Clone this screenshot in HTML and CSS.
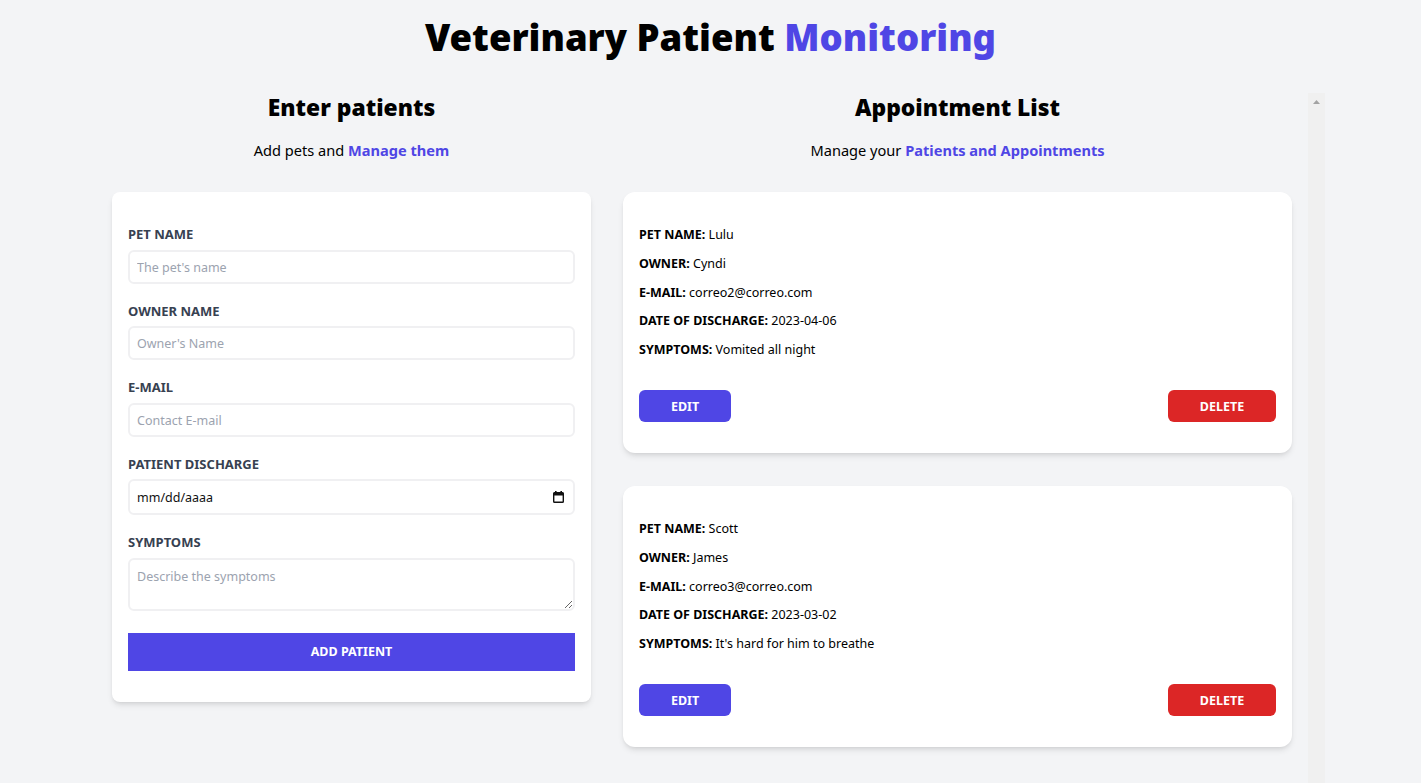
FILE: index.html
```html
<!DOCTYPE html>
<html lang="en">
<head>
<meta charset="utf-8">
<title>Veterinary Patient Monitoring</title>
<link rel="stylesheet" href="styles.css">
</head>
<body>
  <h1 class="title">Veterinary Patient <span class="accent">Monitoring</span></h1>
  <div class="layout">
    <section class="form-col">
      <h2 class="col-title">Enter patients</h2>
      <p class="col-sub">Add pets and <span class="accent-b">Manage them</span></p>
      <form class="form-card">
        <div class="field">
          <label class="label" for="pet">PET NAME</label>
          <input class="input" id="pet" type="text" placeholder="The pet's name">
        </div>
        <div class="field">
          <label class="label" for="owner">OWNER NAME</label>
          <input class="input" id="owner" type="text" placeholder="Owner's Name">
        </div>
        <div class="field">
          <label class="label" for="email">E-MAIL</label>
          <input class="input" id="email" type="email" placeholder="Contact E-mail">
        </div>
        <div class="field">
          <label class="label" for="date">PATIENT DISCHARGE</label>
          <div class="date-wrap">
            <input class="input input-date" id="date" type="text" placeholder="mm/dd/aaaa">
            <svg class="cal-icon" width="11" height="12" viewBox="0 0 11 12" aria-hidden="true">
              <rect x="2" y="0" width="1.6" height="2.5" fill="#111"/>
              <rect x="7.4" y="0" width="1.6" height="2.5" fill="#111"/>
              <rect x="0.7" y="1.7" width="9.6" height="9.6" rx="0.8" fill="none" stroke="#111" stroke-width="1.4"/>
              <rect x="0.7" y="1.7" width="9.6" height="2.8" fill="#111"/>
            </svg>
          </div>
        </div>
        <div class="field field-last">
          <label class="label" for="symptoms">SYMPTOMS</label>
          <textarea class="input textarea" id="symptoms" placeholder="Describe the symptoms"></textarea>
        </div>
        <button class="add-btn" type="button">ADD PATIENT</button>
      </form>
    </section>

    <section class="list-col">
      <h2 class="col-title">Appointment List</h2>
      <p class="col-sub">Manage your <span class="accent-b">Patients and Appointments</span></p>

      <article class="patient-card">
        <p class="row"><b>PET NAME:</b> Lulu</p>
        <p class="row"><b>OWNER:</b> Cyndi</p>
        <p class="row"><b>E-MAIL:</b> correo2@correo.com</p>
        <p class="row"><b>DATE OF DISCHARGE:</b> 2023-04-06</p>
        <p class="row row-last"><b>SYMPTOMS:</b> Vomited all night</p>
        <div class="actions">
          <button class="btn btn-edit" type="button">EDIT</button>
          <button class="btn btn-delete" type="button">DELETE</button>
        </div>
      </article>

      <article class="patient-card">
        <p class="row"><b>PET NAME:</b> Scott</p>
        <p class="row"><b>OWNER:</b> James</p>
        <p class="row"><b>E-MAIL:</b> correo3@correo.com</p>
        <p class="row"><b>DATE OF DISCHARGE:</b> 2023-03-02</p>
        <p class="row row-last"><b>SYMPTOMS:</b> It's hard for him to breathe</p>
        <div class="actions">
          <button class="btn btn-edit" type="button">EDIT</button>
          <button class="btn btn-delete" type="button">DELETE</button>
        </div>
      </article>
    </section>
  </div>
</body>
</html>
```

FILE: styles.css
```css
html {
  overflow: hidden;
}
body {
  margin: 0;
  background: #f3f4f6;
  font-family: "Noto Sans", "Open Sans", sans-serif;
  color: #000;
}
.title {
  margin: 17px 0 0;
  text-align: center;
  font-size: 36.5px;
  line-height: 40px;
  font-weight: 900;
  color: #000;
}
.accent {
  color: #4f46e5;
}
.layout {
  display: flex;
  gap: 16px;
  margin: 36px 0 0 112px;
  width: 1213px;
}
.form-col {
  width: 479px;
  flex: none;
}
.list-col {
  width: 718px;
  flex: none;
  height: 690px;
  overflow-y: auto;
  box-sizing: border-box;
  border-right: 17px solid transparent;
  background-image:
    url("data:image/svg+xml;utf8,<svg xmlns='http://www.w3.org/2000/svg' width='7' height='4' viewBox='0 0 7 4'><path d='M0 4L3.5 0L7 4z' fill='%23a3a3a3'/></svg>"),
    linear-gradient(to left, #f0f0f0 17px, transparent 17px);
  background-repeat: no-repeat, no-repeat;
  background-origin: border-box, border-box;
  background-position: right 5px top 7px, 0 0;
  background-size: 7px 4px, 100% 100%;
}
.col-title {
  margin: 0;
  text-align: center;
  font-size: 22.8px;
  line-height: 30px;
  font-weight: 900;
}
.col-sub {
  margin: 15px 0 30px;
  text-align: center;
  font-size: 14.6px;
  line-height: 24px;
}
.accent-b {
  color: #4f46e5;
  font-weight: 700;
}
.form-card {
  background: #fff;
  border-radius: 8px;
  box-shadow: 0 4px 6px -1px rgba(0,0,0,.1), 0 2px 4px -2px rgba(0,0,0,.1);
  padding: 32px 16px 31px;
}
.field {
  margin-bottom: 17px;
}
.field-last {
  margin-bottom: 22px;
}
.label {
  display: block;
  font-size: 13px;
  line-height: 20px;
  font-weight: 700;
  color: #374151;
  margin-bottom: 5.5px;
}
.input {
  display: block;
  box-sizing: border-box;
  width: 100%;
  height: 34px;
  border: 2px solid #f0f0f2;
  border-radius: 6px;
  padding: 1px 7px 0;
  font-family: inherit;
  font-size: 12.5px;
  color: #111;
  background: #fff;
  outline: none;
}
.input::placeholder {
  color: #9ca3af;
}
.date-wrap {
  position: relative;
}
.input-date {
  height: 36px;
}
.input-date::placeholder {
  color: #111;
}
.cal-icon {
  position: absolute;
  right: 11px;
  top: 12px;
}
.textarea {
  height: 53px;
  padding: 8px 7px;
  resize: vertical;
}
.add-btn {
  display: block;
  width: 100%;
  height: 38px;
  border: none;
  background: #4f46e5;
  color: #fff;
  font-family: inherit;
  font-size: 12.5px;
  font-weight: 700;
  cursor: pointer;
}
.patient-card {
  background: #fff;
  margin: 0 16px 33px;
  border-radius: 12px;
  box-shadow: 0 4px 6px -1px rgba(0,0,0,.1), 0 2px 4px -2px rgba(0,0,0,.1);
  padding: 33px 16px 31px;
}
.row {
  margin: 0 0 8.75px;
  font-size: 12.5px;
  line-height: 20px;
}
.row b {
  font-weight: 700;
}
.row-last {
  margin-bottom: 30px;
}
.actions {
  display: flex;
  justify-content: space-between;
}
.btn {
  height: 32px;
  border: none;
  border-radius: 6px;
  color: #fff;
  font-family: inherit;
  font-size: 12.5px;
  font-weight: 700;
  padding-top: 1px;
  cursor: pointer;
}
.btn-edit {
  width: 92px;
  background: #4f46e5;
}
.btn-delete {
  width: 108px;
  background: #dc2626;
}
```
